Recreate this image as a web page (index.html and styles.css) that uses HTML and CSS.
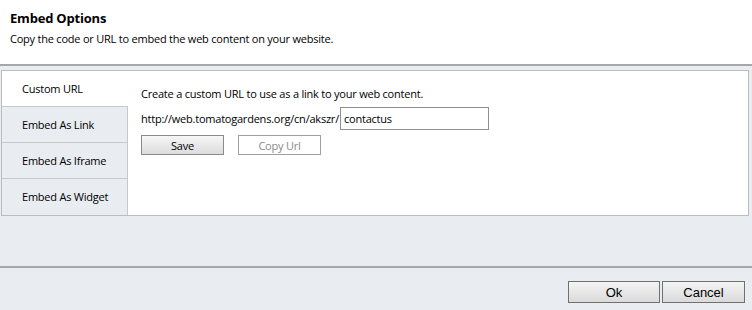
FILE: index.html
```html
<!DOCTYPE html>
<html>
<head>
<meta charset="utf-8">
<link rel="stylesheet" href="styles.css">
</head>
<body>
<div class="dialog">
  <div class="header">
    <div class="title">Embed Options</div>
    <div class="subtitle">Copy the code or URL to embed the web content on your website.</div>
  </div>
  <div class="main">
    <div class="panel">
      <div class="tabs">
        <div class="tab active">Custom URL</div>
        <div class="tab">Embed As Link</div>
        <div class="tab">Embed As Iframe</div>
        <div class="tab">Embed As Widget</div>
      </div>
      <div class="content">
        <div class="desc">Create a custom URL to use as a link to your web content.</div>
        <div class="urlrow">
          <span class="prefix">http://web.tomatogardens.org/cn/akszr/</span>
          <input class="urlinput" type="text" value="contactus">
        </div>
        <div class="btnrow">
          <button class="btn save">Save</button>
          <button class="btn copy">Copy Url</button>
        </div>
      </div>
    </div>
  </div>
  <div class="footer">
    <button class="fbtn ok">Ok</button>
    <button class="fbtn cancel">Cancel</button>
  </div>
</div>
</body>
</html>
```

FILE: styles.css
```css
html, body {
  margin: 0;
  padding: 0;
}
body {
  width: 752px;
  height: 310px;
  background: #e9ecf0;
  font-family: "Open Sans", "Noto Sans", sans-serif;
  font-size: 11px;
  letter-spacing: -0.22px;
  color: #000;
  overflow: hidden;
}
.dialog {
  display: flex;
  flex-direction: column;
  height: 310px;
}
.header {
  background: #fff;
  height: 66px;
  padding: 10px 10px 0 10px;
  box-sizing: border-box;
  border-bottom: 2px solid #a7a7a7;
}
.title {
  font-weight: bold;
  font-size: 13px;
  line-height: 17px;
  letter-spacing: -0.2px;
}
.subtitle {
  margin-top: 4px;
  font-size: 11px;
  line-height: 15px;
}
.main {
  height: 202px;
  padding: 4px 3px 0 1px;
  box-sizing: border-box;
  border-bottom: 2px solid #a7a7a7;
}
.panel {
  display: flex;
  height: 146px;
  border: 1px solid #bdbdbd;
  background: #fff;
  box-sizing: border-box;
}
.tabs {
  width: 125px;
  display: flex;
  flex-direction: column;
  border-right: 1px solid #c8c8c8;
}
.tab {
  height: 36px;
  box-sizing: border-box;
  padding-left: 20px;
  line-height: 36px;
  background: #e9ecf0;
  border-bottom: 1px solid #c8c8c8;
}
.tab.active {
  background: #fff;
  margin-right: -1px;
}
.tab:last-child {
  border-bottom: none;
}
.content {
  padding: 15px 0 0 13px;
}
.desc {
  line-height: 15px;
}
.urlrow {
  display: flex;
  align-items: center;
  margin-top: 6px;
}
.prefix {
  line-height: 15px;
}
.urlinput {
  margin-left: 1px;
  width: 149px;
  height: 23px;
  box-sizing: border-box;
  border: 1px solid #8f8f8f;
  padding: 0 3px;
  font-family: inherit;
  font-size: 11px;
  letter-spacing: -0.22px;
  color: #000;
  outline: none;
}
.btnrow {
  display: flex;
  gap: 14px;
  margin-top: 5px;
}
.btn {
  width: 83px;
  height: 20px;
  box-sizing: border-box;
  font-family: inherit;
  font-size: 11px;
  letter-spacing: -0.22px;
  padding: 0;
}
.save {
  border: 1px solid #8a8a8a;
  background: linear-gradient(#f6f6f6, #dcdcdc);
  color: #000;
}
.copy {
  border: 1px solid #a0a0a0;
  background: #fff;
  color: #8a8a8a;
}
.footer {
  flex: 1;
  display: flex;
  justify-content: flex-end;
  align-items: flex-start;
  padding: 13px 7px 0 0;
  gap: 2px;
}
.fbtn {
  height: 22px;
  box-sizing: border-box;
  border: 1px solid #707070;
  background: linear-gradient(#f4f4f4, #dadada);
  font-family: "Liberation Sans", Arial, sans-serif;
  font-size: 13px;
  color: #000;
  padding: 0;
}
.ok {
  width: 92px;
}
.cancel {
  width: 83px;
}
```
